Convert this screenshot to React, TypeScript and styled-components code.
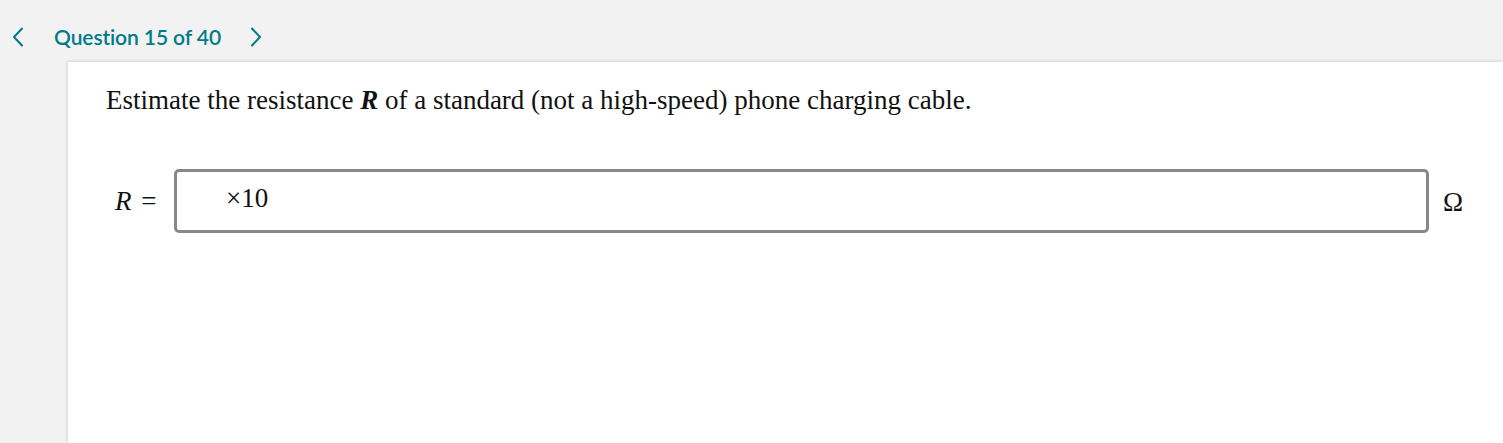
import React from "react";
import styled, { createGlobalStyle } from "styled-components";

const Global = createGlobalStyle`
  html, body { margin: 0; padding: 0; background: #f2f2f2; }
  body { width: 1503px; height: 443px; overflow: hidden; }
`;

const Page = styled.div`
  display: flex;
  flex-direction: column;
  height: 443px;
  background: #f2f2f2;
`;

const NavBar = styled.nav`
  height: 62px;
  display: flex;
  align-items: center;
  padding-left: 10px;
  box-sizing: border-box;
  padding-top: 11px;
`;

const NavButton = styled.button`
  border: none;
  background: none;
  padding: 0;
  margin: 0;
  display: flex;
  align-items: center;
  justify-content: center;
  width: 16px;
  height: 24px;
  cursor: pointer;
  color: #007c89;
`;

const NavTitle = styled.span`
  font-family: Lato, "Open Sans", sans-serif;
  font-size: 21px;
  font-weight: 600;
  color: #007c89;
  margin: 0 27px 0 28px;
  letter-spacing: -0.1px;
`;

const Panel = styled.main`
  flex: 1;
  margin-left: 68px;
  background: #ffffff;
  box-shadow: -1px -1px 3px rgba(0, 0, 0, 0.12);
  padding: 22px 0 0 38px;
  box-sizing: border-box;
  font-family: "Liberation Serif", "Times New Roman", serif;
  color: #111;
`;

const Prompt = styled.p`
  margin: 0;
  font-size: 27px;
  line-height: 32px;
`;

const Var = styled.i`
  font-weight: bold;
  font-style: italic;
`;

const AnswerRow = styled.div`
  display: flex;
  align-items: center;
  margin-top: 53px;
`;

const Label = styled.span`
  font-size: 27px;
  width: 68px;
  padding-left: 9px;
  box-sizing: border-box;
  white-space: nowrap;
  word-spacing: 3px;
`;

const Field = styled.div`
  width: 1255px;
  height: 64px;
  box-sizing: border-box;
  border: 3px solid #888888;
  border-radius: 5px;
  display: flex;
  align-items: center;
  padding-left: 49px;
  padding-bottom: 6px;
  font-size: 27px;
`;

const Unit = styled.span`
  font-size: 27px;
  margin-left: 14px;
  padding-top: 2px;
`;

const Chevron = ({ dir }: { dir: "left" | "right" }) => (
  <svg width="12" height="20" viewBox="0 0 12 20" fill="none">
    <path
      d={dir === "left" ? "M10 1.5 L2 10 L10 18.5" : "M2 1.5 L10 10 L2 18.5"}
      stroke="#007c89"
      strokeWidth="2"
      strokeLinecap="round"
      strokeLinejoin="round"
    />
  </svg>
);

export default function App() {
  return (
    <>
      <Global />
      <Page>
        <NavBar>
          <NavButton aria-label="Previous question">
            <Chevron dir="left" />
          </NavButton>
          <NavTitle>Question 15 of 40</NavTitle>
          <NavButton aria-label="Next question">
            <Chevron dir="right" />
          </NavButton>
        </NavBar>
        <Panel>
          <Prompt>
            Estimate the resistance <Var>R</Var> of a standard (not a high-speed) phone charging cable.
          </Prompt>
          <AnswerRow>
            <Label>
              <i>R</i> =
            </Label>
            <Field>×10</Field>
            <Unit>Ω</Unit>
          </AnswerRow>
        </Panel>
      </Page>
    </>
  );
}
